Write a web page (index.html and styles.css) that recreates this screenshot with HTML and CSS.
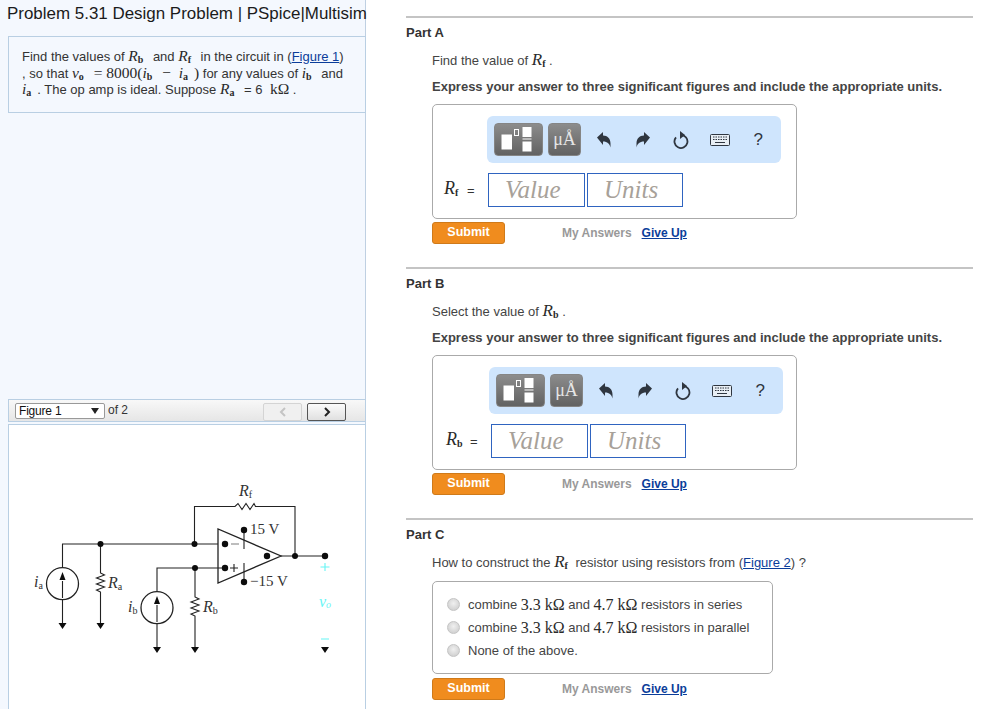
FILE: index.html
```html
<!DOCTYPE html>
<html lang="en">
<head>
<meta charset="utf-8">
<title>Problem 5.31 Design Problem</title>
<link rel="stylesheet" href="styles.css">
</head>
<body>
<div class="page">
  <aside class="left">
    <h1 class="title">Problem 5.31 Design Problem | PSpice|Multisim</h1>
    <div class="problem">
      Find the values of <span class="m"><i>R</i><sub>b</sub></span> and <span class="m"><i>R</i><sub>f</sub></span> in the circuit in (<a href="#">Figure 1</a>)<br>
      , so that <span class="m"><i>v<sub>o</sub></i> = 8000(<i>i</i><sub>b</sub> − &nbsp;<i>i</i><sub>a</sub>)</span> for any values of <span class="m"><i>i</i><sub>b</sub></span> and<br>
      <span class="m"><i>i</i><sub>a</sub></span>. The op amp is ideal. Suppose <span class="m"><i>R</i><sub>a</sub></span> = 6 <span class="m">&nbsp;kΩ</span> .
    </div>
    <div class="spacer"></div>
    <div class="figbar">
      <span class="select">Figure 1<span class="caret"></span></span>
      <span class="of">of 2</span>
      <span class="nav nav-off">
        <svg width="8" height="10" viewBox="0 0 8 10"><path d="M6 1 2 5l4 4" fill="none" stroke="#c4c4c4" stroke-width="2"/></svg>
      </span>
      <span class="nav">
        <svg width="8" height="10" viewBox="0 0 8 10"><path d="M2 1l4 4-4 4" fill="none" stroke="#222" stroke-width="2"/></svg>
      </span>
    </div>
    <div class="figure">
      <svg class="circuit" viewBox="9 425 356 284" width="356" height="284">
        <g class="w">
          <path d="M62.5 567.5V544H218"/>
          <path d="M62.5 600V623"/>
          <path d="M100.5 544V573l4 2-8 3 8 3-8 3 8 3-8 3 4 2V623"/>
          <path d="M194.5 544V506.5H235l3-3 4 6 4-6 4 6 4-6 1.500 3H295V556"/>
          <path d="M218 529V583L281 556Z" class="thick"/>
          <path d="M281 556H325"/>
          <path d="M225 568H157V591"/>
          <path d="M157 624V647"/>
          <path d="M195 568V597l4 2-8 3 8 3-8 3 8 3-8 3 4 2V647"/>
          <path d="M244 530V549M244 563V582"/>
          <path d="M231 544H239" class="grey"/>
          <path d="M230 568H238M234 564V572"/>
          <circle cx="62.500" cy="583.700" r="16" class="thick"/>
          <circle cx="157" cy="607.700" r="16" class="thick"/>
          <path d="M62.500 598V581M157 622V605"/>
          <path d="M325 563V571M320.500 567H329.500M321 639H329" class="cy"/>
        </g>
        <g class="dots">
          <circle cx="100.500" cy="544" r="3"/><circle cx="194.500" cy="544" r="3"/><circle cx="225" cy="544" r="3.200"/>
          <circle cx="195" cy="568" r="3"/><circle cx="225" cy="568" r="3.200"/><circle cx="267" cy="556" r="3.200"/>
          <circle cx="295" cy="556" r="3"/><circle cx="325" cy="556" r="3.200"/>
          <circle cx="244" cy="530" r="3.200"/><circle cx="244" cy="582" r="3.200"/>
          <path d="M58.500 623h8l-4 6zM96.500 623h8l-4 6zM153 647h8l-4 6zM191 647h8l-4 6zM321 647h8l-4 6zM62.500 572l3 8h-6zM157 596l3 8h-6z"/>
        </g>
        <g class="lbl">
          <text x="239" y="496"><tspan class="it">R</tspan><tspan class="sb" dy="2">f</tspan></text>
          <text x="250" y="534">15 V</text>
          <text x="250" y="586">−15 V</text>
          <text x="34" y="587"><tspan class="it">i</tspan><tspan class="sb" dy="2">a</tspan></text>
          <text x="108" y="588"><tspan class="it">R</tspan><tspan class="sb" dy="2">a</tspan></text>
          <text x="128" y="612"><tspan class="it">i</tspan><tspan class="sb" dy="2">b</tspan></text>
          <text x="203" y="612"><tspan class="it">R</tspan><tspan class="sb" dy="2">b</tspan></text>
          <text x="319" y="607" class="cyt"><tspan class="it">v</tspan><tspan class="sb it" dy="1">o</tspan></text>
        </g>
      </svg>
    </div>
  </aside>

  <main class="right">
    <section class="part">
      <h2>Part A</h2>
      <p class="q">Find the value of <span class="m"><i>R</i><sub>f</sub></span> .</p>
      <p class="ins">Express your answer to three significant figures and include the appropriate units.</p>
      <div class="box">
        <div class="toolbar">
          <span class="tbtn tpl"><svg width="42" height="26" viewBox="0 0 42 26"><rect x="3.500" y="7.500" width="10.500" height="15" fill="#fff"/><rect x="16.500" y="2.500" width="4" height="6" fill="none" stroke="#fff"/><rect x="24.500" y="0" width="9" height="10" fill="#fff"/><rect x="24.500" y="11.500" width="9" height="1" fill="#fff"/><rect x="24.500" y="14.500" width="9" height="10" fill="#fff"/></svg></span>
          <span class="tbtn unit">μÅ</span>
          <span class="ic"><svg width="16" height="17" viewBox="0 0 16 17"><path d="M1 6.500l6-5.500v3.500c4.500 0 7.500 3 7.500 8v4c-.8-3.500-3-6-7.500-6V14z" fill="#2f3640"/></svg></span>
          <span class="ic"><svg width="16" height="17" viewBox="0 0 16 17"><path d="M15 6.500L9 1v3.500c-4.500 0-7.500 3-7.500 8v4c.8-3.500 3-6 7.500-6V14z" fill="#2f3640"/></svg></span>
          <span class="ic"><svg width="18" height="18" viewBox="0 0 18 18"><path d="M9 4a6.500 6.500 0 1 1-5 2.300" fill="none" stroke="#2f3640" stroke-width="1.800"/><path d="M8 0l5 4-5 4z" fill="#2f3640"/></svg></span>
          <span class="ic"><svg width="20" height="12" viewBox="0 0 20 12"><rect x=".5" y=".5" width="19" height="11" rx="1" fill="#e8eef4" stroke="#2f3640"/><path d="M3 3h14M3 5.500h14" stroke="#2f3640" stroke-dasharray="1.500 1"/><path d="M5 8.500h10" stroke="#2f3640"/></svg></span>
          <span class="ic help">?</span>
        </div>
        <div class="row">
          <span class="lab m"><i>R</i><sub>f</sub></span><span class="eq">=</span>
          <span class="inp">Value</span><span class="inp">Units</span>
        </div>
      </div>
      <div class="actions"><span class="submit">Submit</span><span class="my">My Answers</span><a href="#" class="give">Give Up</a></div>
    </section>

    <section class="part part-b">
      <h2>Part B</h2>
      <p class="q">Select the value of <span class="m"><i>R</i><sub>b</sub></span> .</p>
      <p class="ins">Express your answer to three significant figures and include the appropriate units.</p>
      <div class="box">
        <div class="toolbar">
          <span class="tbtn tpl"><svg width="42" height="26" viewBox="0 0 42 26"><rect x="3.500" y="7.500" width="10.500" height="15" fill="#fff"/><rect x="16.500" y="2.500" width="4" height="6" fill="none" stroke="#fff"/><rect x="24.500" y="0" width="9" height="10" fill="#fff"/><rect x="24.500" y="11.500" width="9" height="1" fill="#fff"/><rect x="24.500" y="14.500" width="9" height="10" fill="#fff"/></svg></span>
          <span class="tbtn unit">μÅ</span>
          <span class="ic"><svg width="16" height="17" viewBox="0 0 16 17"><path d="M1 6.500l6-5.500v3.500c4.500 0 7.500 3 7.500 8v4c-.8-3.500-3-6-7.500-6V14z" fill="#2f3640"/></svg></span>
          <span class="ic"><svg width="16" height="17" viewBox="0 0 16 17"><path d="M15 6.500L9 1v3.500c-4.500 0-7.500 3-7.500 8v4c.8-3.500 3-6 7.500-6V14z" fill="#2f3640"/></svg></span>
          <span class="ic"><svg width="18" height="18" viewBox="0 0 18 18"><path d="M9 4a6.500 6.500 0 1 1-5 2.300" fill="none" stroke="#2f3640" stroke-width="1.800"/><path d="M8 0l5 4-5 4z" fill="#2f3640"/></svg></span>
          <span class="ic"><svg width="20" height="12" viewBox="0 0 20 12"><rect x=".5" y=".5" width="19" height="11" rx="1" fill="#e8eef4" stroke="#2f3640"/><path d="M3 3h14M3 5.500h14" stroke="#2f3640" stroke-dasharray="1.500 1"/><path d="M5 8.500h10" stroke="#2f3640"/></svg></span>
          <span class="ic help">?</span>
        </div>
        <div class="row">
          <span class="lab m"><i>R</i><sub>b</sub></span><span class="eq">=</span>
          <span class="inp">Value</span><span class="inp">Units</span>
        </div>
      </div>
      <div class="actions"><span class="submit">Submit</span><span class="my">My Answers</span><a href="#" class="give">Give Up</a></div>
    </section>

    <section class="part part-c">
      <h2>Part C</h2>
      <p class="q">How to construct the <span class="m"><i>R</i><sub>f</sub></span> resistor using resistors from (<a href="#">Figure 2</a>) ?</p>
      <div class="box choices">
        <div class="choice"><span class="radio"></span>combine <span class="m">3.3 kΩ</span> and <span class="m">4.7 kΩ</span> resistors in series</div>
        <div class="choice"><span class="radio"></span>combine <span class="m">3.3 kΩ</span> and <span class="m">4.7 kΩ</span> resistors in parallel</div>
        <div class="choice"><span class="radio"></span>None of the above.</div>
      </div>
      <div class="actions"><span class="submit">Submit</span><span class="my">My Answers</span><a href="#" class="give">Give Up</a></div>
    </section>
  </main>
</div>
</body>
</html>
```

FILE: styles.css
```css
* { box-sizing: border-box; }
html, body { margin: 0; padding: 0; height: 709px; overflow: hidden; background: #fff; }
body { font-family: "Liberation Sans", Arial, sans-serif; font-size: 13px; color: #333; }
a { color: #0b3d9a; text-decoration: underline; }
.page { display: flex; width: 994px; height: 709px; }

.left { width: 366px; height: 709px; flex: none; display: flex; flex-direction: column; background: #f4f8fe; border-right: 1px solid #bfd0e2; padding-left: 8px; position: relative; z-index: 1; }
.title { margin: 4px 0 0 -1px; font-size: 16.950px; line-height: 20px; font-weight: 400; color: #1b1b1b; white-space: nowrap; }
.problem { margin-top: 12px; width: 358px; height: 77px; border: 1px solid #b9cfe3; padding: 12px 13px 0; line-height: 16.700px; white-space: nowrap; background: #f4f8fe; }
.m { font-family: "Liberation Serif", "Times New Roman", serif; font-size: 17px; line-height: 0; color: #2a2a2a; }
.m i { font-style: italic; }
.m sub { font-size: 10px; line-height: 0; vertical-align: -2px; font-style: normal; font-weight: 700; }
.problem .m { font-size: 15.500px; }
.problem .m sub { margin-right: 6px; }
.spacer { height: 286px; flex: none; }
.figbar { width: 358px; height: 23px; border: 1px solid #b9cfe3; background: linear-gradient(#f8f8f8, #e6e6e6); display: flex; align-items: flex-start; padding: 3px 0 0 6px; color: #333; font-size: 12px; white-space: nowrap; }
.select { width: 90px; height: 16px; flex: none; background: #fff; border: 1px solid #999; border-radius: 2px; padding-left: 3px; line-height: 14px; color: #111; position: relative; letter-spacing: -.2px; }
.caret { position: absolute; right: 5px; top: 4px; border: 4px solid transparent; border-top: 6px solid #222; border-bottom: 0; }
.of { margin-left: 3px; line-height: 14px; width: 23px; flex: none; }
.nav { width: 39px; height: 18px; flex: none; background: linear-gradient(#fbfbfb, #e0e0e0); border: 1px solid #555; border-radius: 2px; display: flex; align-items: center; justify-content: center; margin-left: 5px; }
.nav-off { margin-left: 132px; border-color: #d4d4d4; background: #f0f0f0; }
.figure { width: 358px; height: 285px; margin-top: 2px; border: 1px solid #b9cfe3; border-bottom: 0; background: #fff; }
.circuit { display: block; }
.w path, .w circle { fill: none; stroke: #222; stroke-width: 1.100; }
.w .thick { stroke-width: 1.300; fill: none; }
.w .grey { stroke: #888; }
.w .cy { stroke: #66f5f5; }
.dots { fill: #0c0c0c; }
.lbl text { font-family: "Liberation Serif", serif; font-size: 15px; fill: #333; }
.lbl .it { font-style: italic; font-size: 16px; }
.lbl .sb { font-size: 10px; }
.lbl .cyt { fill: #66f5f5; }

.right { flex: 1; padding-left: 40px; min-width: 0; }
.part { width: 567px; height: 251px; border-top: 2px solid #c4c4c4; margin-top: 0; }
.part:first-child { margin-top: 16px; }
.part h2 { margin: 7px 0 0; font-size: 13px; line-height: 16px; font-weight: 700; color: #333; }
.q { margin: 12px 0 0 26px; line-height: 16px; color: #444; }
.ins { margin: 10px 0 0 26px; line-height: 16px; font-weight: 700; font-size: 13px; color: #444; white-space: nowrap; }
.box { margin: 9px 0 0 26px; width: 365px; height: 115px; background: #fff; border: 1px solid #aaa; border-radius: 5px; padding: 11px 0 0 54px; }
.part-b .box { padding-left: 56px; }
.toolbar { width: 294px; height: 47px; background: #cfe5fd; border-radius: 6px; display: flex; align-items: center; padding-left: 7px; }
.tbtn { height: 33px; border-radius: 4px; background: linear-gradient(#8c8c8c, #626262); border: 1px solid #858585; display: flex; align-items: center; justify-content: center; }
.tpl { width: 49px; margin-right: 5px; }
.unit { width: 33px; color: #e6e6e6; font-family: "Liberation Serif", serif; font-size: 18px; }
.ic { width: 38.500px; display: flex; align-items: center; justify-content: center; color: #2f3640; }
.ic:nth-child(3) { margin-left: 4px; }
.help { font-size: 17px; }
.row { display: flex; align-items: center; height: 34px; margin: 10px 0 0 -43px; }
.lab { width: 23px; font-size: 18px; }
.eq { width: 21px; color: #333; font-size: 13px; }
.part-b .lab { width: 24px; }
.inp { width: 97px; height: 34px; flex: none; border: 1px solid #2f64c0; margin-right: 2px; padding-left: 16px; font-family: "Liberation Serif", serif; font-style: italic; font-size: 25px; line-height: 32px; color: #a7a199; background: #fff; }
.inp:last-child { width: 96px; }
.actions { display: flex; align-items: center; height: 22px; margin: 3px 0 0 26px; font-size: 12px; }
.submit { width: 73px; height: 22px; border: 1px solid #cf7a1a; border-radius: 3px; background: #f08c1e; color: #fff; font-weight: 700; font-size: 12.500px; line-height: 19px; text-align: center; }
.my { margin-left: 57px; color: #999; font-weight: 700; }
.give { margin-left: 10px; font-weight: 700; color: #0b3d9a; }
.part-c { height: auto; }
.part-c .q .m sub { margin-right: 4px; }
.choices { width: 341px; height: 93px; margin-top: 10px; padding: 11px 0 0 14px; }
.choices + .actions { margin-top: 4px; }
.choice { display: flex; align-items: center; height: 23px; color: #444; white-space: pre; }
.choice .m { font-size: 16px; }
.radio { width: 13px; height: 13px; border-radius: 50%; background: radial-gradient(circle at 50% 40%, #f0f0f0, #c8c8c8); border: 1px solid #c4c4c4; margin-right: 8px; flex: none; }
```
